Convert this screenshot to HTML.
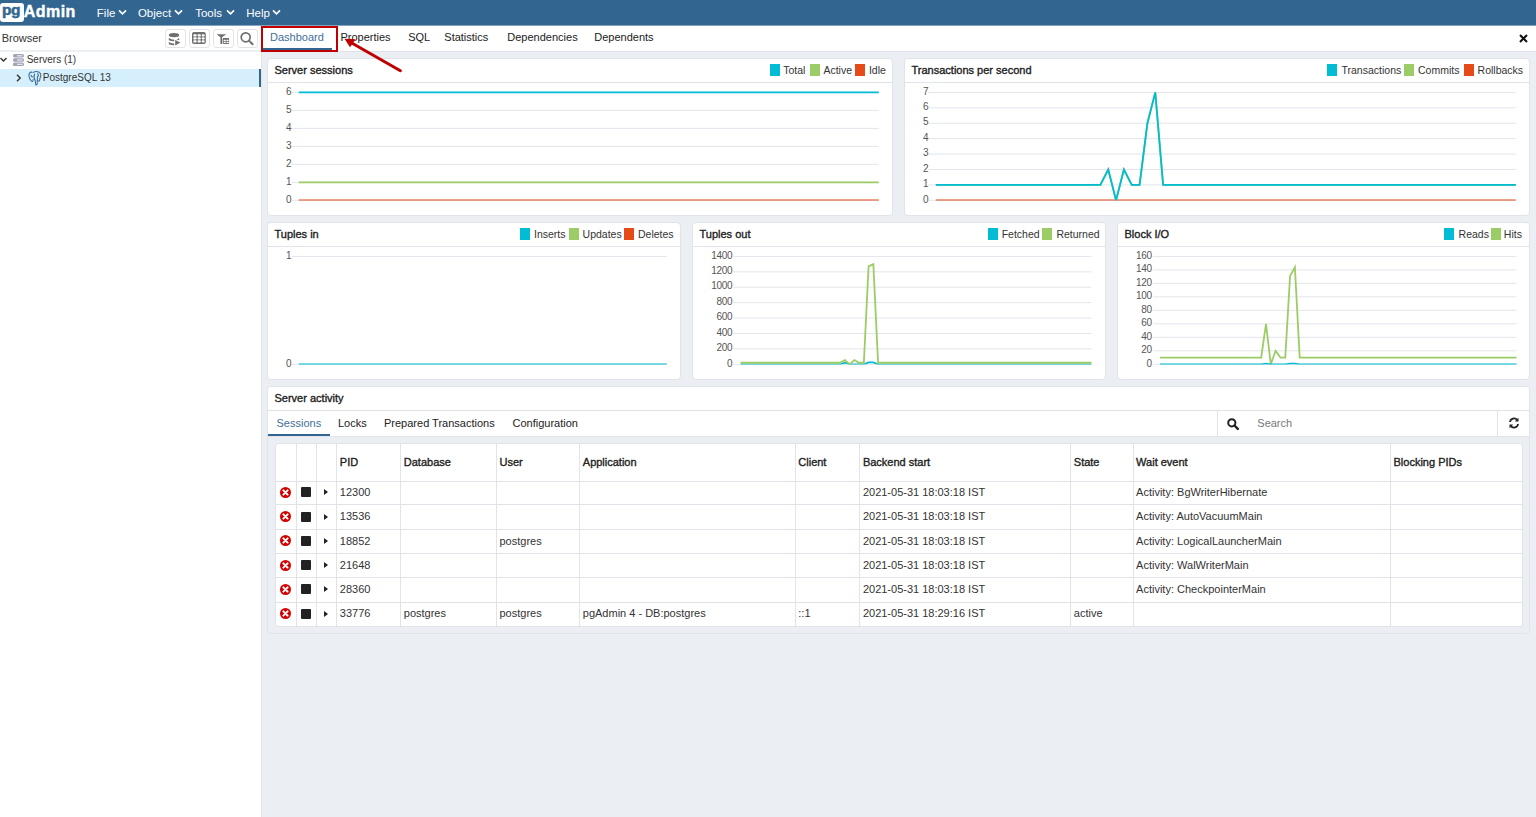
<!DOCTYPE html>
<html><head><meta charset="utf-8"><style>
html,body{margin:0;padding:0;}
body{width:1536px;height:817px;overflow:hidden;position:relative;background:#ebeef3;font-family:"Liberation Sans", sans-serif;}
.a{position:absolute;}
.t{position:absolute;line-height:1;white-space:nowrap;}
</style></head><body>
<div class="a" style="left:0px;top:0px;width:1536px;height:25px;background:#326690;"></div>
<div class="a" style="left:0px;top:3px;width:24px;height:18.5px;background:#fff;border-radius:3px;"></div>
<div class="t" style="left:2.0px;top:2.28px;font-size:15.5px;color:#326690;font-weight:bold;letter-spacing:-0.4px;-webkit-text-stroke:0.5px #326690;">pg</div>
<div class="t" style="left:23.8px;top:3.96px;font-size:16px;color:#fff;font-weight:bold;letter-spacing:0.45px;-webkit-text-stroke:0.4px #fff;">Admin</div>
<div class="t" style="left:96.8px;top:7.57px;font-size:11.5px;color:#fff;">File</div>
<svg class="a" style="left:117.60000000000001px;top:9.2px" width="9" height="7" viewBox="0 0 9 7"><path d="M1 1.4 L4.5 4.8 L8 1.4" fill="none" stroke="#fff" stroke-width="1.6"/></svg>
<div class="t" style="left:137.9px;top:7.57px;font-size:11.5px;color:#fff;">Object</div>
<svg class="a" style="left:174.0px;top:9.2px" width="9" height="7" viewBox="0 0 9 7"><path d="M1 1.4 L4.5 4.8 L8 1.4" fill="none" stroke="#fff" stroke-width="1.6"/></svg>
<div class="t" style="left:195.2px;top:7.57px;font-size:11.5px;color:#fff;">Tools</div>
<svg class="a" style="left:225.5px;top:9.2px" width="9" height="7" viewBox="0 0 9 7"><path d="M1 1.4 L4.5 4.8 L8 1.4" fill="none" stroke="#fff" stroke-width="1.6"/></svg>
<div class="t" style="left:246.3px;top:7.57px;font-size:11.5px;color:#fff;">Help</div>
<svg class="a" style="left:272.2px;top:9.2px" width="9" height="7" viewBox="0 0 9 7"><path d="M1 1.4 L4.5 4.8 L8 1.4" fill="none" stroke="#fff" stroke-width="1.6"/></svg>
<div class="a" style="left:0px;top:25px;width:261px;height:792px;background:#fff;"></div>
<div class="t" style="left:1.7px;top:32.79px;font-size:11px;color:#333;">Browser</div>
<div class="a" style="left:165px;top:29.2px;width:20.5px;height:18.5px;border:1px solid #e0e3e8;border-radius:3px;box-sizing:border-box;background:#fff;"></div>
<div class="a" style="left:189.2px;top:29.2px;width:20.5px;height:18.5px;border:1px solid #e0e3e8;border-radius:3px;box-sizing:border-box;background:#fff;"></div>
<div class="a" style="left:213.3px;top:29.2px;width:20.5px;height:18.5px;border:1px solid #e0e3e8;border-radius:3px;box-sizing:border-box;background:#fff;"></div>
<div class="a" style="left:237.4px;top:29.2px;width:20.5px;height:18.5px;border:1px solid #e0e3e8;border-radius:3px;box-sizing:border-box;background:#fff;"></div>
<svg class="a" style="left:163px;top:27px" width="100" height="24" viewBox="0 0 100 24">
<g fill="#6e6e6e">
<ellipse cx="11" cy="8.1" rx="5.2" ry="2.2"/>
<path d="M5.8 11 Q8.5 12.6 11.2 12.8 V14.2 Q8 14 5.8 13.2Z"/>
<path d="M13.6 12.4 Q15 12 16.2 11 V13.2Z"/>
<path d="M5.8 14.9 Q8.5 16.4 11.2 16.6 V18.2 Q8 18 5.8 17.2Z"/>
<path d="M12.2 12.9 L17.4 15.6 L12.2 18.6Z"/>
</g>
<g>
<rect x="29" y="5" width="13.8" height="12" rx="2" fill="#707070"/>
<g fill="#fff"><rect x="30.3" y="7.2" width="3.4" height="2.2" rx="1"/><rect x="34.5" y="7.2" width="3.4" height="2.2" rx="1"/><rect x="38.7" y="7.2" width="3" height="2.2" rx="1"/>
<rect x="30.3" y="10.2" width="3.4" height="2.2" rx="1"/><rect x="34.5" y="10.2" width="3.4" height="2.2" rx="1"/><rect x="38.7" y="10.2" width="3" height="2.2" rx="1"/>
<rect x="30.3" y="13.2" width="3.4" height="2.2" rx="1"/><rect x="34.5" y="13.2" width="3.4" height="2.2" rx="1"/><rect x="38.7" y="13.2" width="3" height="2.2" rx="1"/></g>
</g>
<g fill="#707070">
<path d="M53.6 7.2 H63.3 L59 10.2 V17 H57.4 V10.2Z"/>
<rect x="59.6" y="10.9" width="6.5" height="6.1" rx="1"/>
<g fill="#fff"><rect x="60.6" y="12.8" width="2.2" height="1.1" rx="0.5"/><rect x="63.4" y="12.8" width="2.2" height="1.1" rx="0.5"/><rect x="60.6" y="14.8" width="2.2" height="1.1" rx="0.5"/><rect x="63.4" y="14.8" width="2.2" height="1.1" rx="0.5"/></g>
</g>
<circle cx="82.7" cy="10.3" r="4.5" fill="none" stroke="#6e6e6e" stroke-width="1.7"/>
<path d="M86 13.6 L89.6 17.2" stroke="#6e6e6e" stroke-width="2" stroke-linecap="round"/>
</svg>
<div class="a" style="left:0px;top:50px;width:261px;height:2px;background:#ebeef3;"></div>
<svg class="a" style="left:0px;top:57px" width="8" height="6" viewBox="0 0 8 6"><path d="M0.5 1 L3.5 4 L6.5 1" fill="none" stroke="#333" stroke-width="1.4"/></svg>
<svg class="a" style="left:13px;top:54px" width="11" height="12" viewBox="0 0 11 12">
<g fill="#a3a3b8"><rect x="0" y="0" width="11" height="3.6" rx="1.6"/><rect x="0" y="4.2" width="11" height="3.6" rx="1.6"/><rect x="0" y="8.4" width="11" height="3.6" rx="1.6"/></g>
<g fill="#fff"><rect x="4" y="1.4" width="5.5" height="0.9"/><rect x="4" y="5.6" width="5.5" height="0.9"/><rect x="4" y="9.8" width="5.5" height="0.9"/></g>
</svg>
<div class="t" style="left:26.7px;top:55.14px;font-size:10px;color:#333;">Servers (1)</div>
<div class="a" style="left:0px;top:69px;width:261px;height:18px;background:#d6effc;"></div>
<div class="a" style="left:258.5px;top:69px;width:2.5px;height:18px;background:#326690;"></div>
<svg class="a" style="left:16px;top:74px" width="6" height="8" viewBox="0 0 6 8"><path d="M1 0.8 L4.2 4 L1 7.2" fill="none" stroke="#333" stroke-width="1.4"/></svg>
<svg class="a" style="left:27.5px;top:70.5px" width="14" height="15" viewBox="0 0 14 15">
<g fill="none" stroke="#3a6d96" stroke-width="1.05" stroke-linecap="round">
<path d="M4.2 1.2 C1.8 0.8 0.6 2.8 1 5.2 C1.4 7.6 2.4 9.6 3.8 10.4 C4.6 10.8 5.2 10 5 8.6"/>
<path d="M5.2 1.4 C7 0.4 9.6 0.5 11.2 1.3 C13.2 2.6 13 5.2 12 7.2 C11.5 8.4 12.2 9.6 11 10.2 C10.2 10.5 9.8 9.8 9.6 9"/>
<path d="M6.6 3 C5.6 5.2 6 7.8 7.2 9.8 C7.8 11.2 7.2 12.8 7.8 13.8 C8.8 14.2 9.4 13.2 9.2 11.6 C9 10 9.6 8 9.4 6"/>
<path d="M9.5 2.5 C10.5 3.5 10.5 5 9.6 6"/>
<path d="M3 4 C3.2 5.5 4 6 4.6 5.8"/>
</g></svg>
<div class="t" style="left:42.8px;top:73.03px;font-size:10px;color:#333;">PostgreSQL 13</div>
<div class="a" style="left:261px;top:25px;width:1275px;height:792px;background:#ebeef3;"></div>
<div class="a" style="left:261px;top:25px;width:1275px;height:26px;background:#fff;"></div>
<div class="a" style="left:0px;top:25px;width:1536px;height:1px;background:#86a3bd;"></div>
<div class="a" style="left:261px;top:51px;width:1px;height:766px;background:#e0e3e8;"></div>
<div class="a" style="left:261px;top:51px;width:1275px;height:1px;background:#e0e3e8;"></div>
<div class="t" style="left:270px;top:32.49px;font-size:11px;color:#3f6f99;">Dashboard</div>
<div class="t" style="left:340.4px;top:32.49px;font-size:11px;color:#222222;">Properties</div>
<div class="t" style="left:408.2px;top:32.49px;font-size:11px;color:#222222;">SQL</div>
<div class="t" style="left:444.3px;top:32.49px;font-size:11px;color:#222222;">Statistics</div>
<div class="t" style="left:507.3px;top:32.49px;font-size:11px;color:#222222;">Dependencies</div>
<div class="t" style="left:594.3px;top:32.49px;font-size:11px;color:#222222;">Dependents</div>
<div class="a" style="left:262px;top:48px;width:69.5px;height:2.5px;background:#326690;"></div>
<svg class="a" style="left:1519px;top:34px" width="9" height="9" viewBox="0 0 9 9"><path d="M1 1 L8 8 M8 1 L1 8" stroke="#111" stroke-width="2"/></svg>
<div class="a" style="left:267px;top:58px;width:626px;height:158px;background:#fff;border:1px solid #e0e3e8;border-radius:4px;box-sizing:border-box;"></div>
<div class="a" style="left:267px;top:82px;width:626px;height:1px;background:#e0e3e8;"></div>
<div class="t" style="left:274.5px;top:64.69px;font-size:11px;color:#222222;-webkit-text-stroke:0.35px #222;">Server sessions</div>
<div class="a" style="left:769.6px;top:64px;width:10px;height:12px;background:#00bcd4;"></div>
<div class="t" style="left:783.2px;top:65.11px;font-size:10.5px;color:#333;">Total</div>
<div class="a" style="left:809.7px;top:64px;width:10px;height:12px;background:#9ccc65;"></div>
<div class="t" style="left:823.4px;top:65.11px;font-size:10.5px;color:#333;">Active</div>
<div class="a" style="left:854.8px;top:64px;width:10px;height:12px;background:#e64a19;"></div>
<div class="t" style="left:868.9px;top:65.11px;font-size:10.5px;color:#333;">Idle</div>
<div class="a" style="left:904px;top:58px;width:626px;height:158px;background:#fff;border:1px solid #e0e3e8;border-radius:4px;box-sizing:border-box;"></div>
<div class="a" style="left:904px;top:82px;width:626px;height:1px;background:#e0e3e8;"></div>
<div class="t" style="left:911.5px;top:64.69px;font-size:11px;color:#222222;-webkit-text-stroke:0.35px #222;">Transactions per second</div>
<div class="a" style="left:1327px;top:64px;width:10px;height:12px;background:#00bcd4;"></div>
<div class="t" style="left:1341.5px;top:65.11px;font-size:10.5px;color:#333;">Transactions</div>
<div class="a" style="left:1404.2px;top:64px;width:10px;height:12px;background:#9ccc65;"></div>
<div class="t" style="left:1418px;top:65.11px;font-size:10.5px;color:#333;">Commits</div>
<div class="a" style="left:1463.8px;top:64px;width:10px;height:12px;background:#e64a19;"></div>
<div class="t" style="left:1477.6px;top:65.11px;font-size:10.5px;color:#333;">Rollbacks</div>
<div class="a" style="left:267px;top:222px;width:414px;height:158px;background:#fff;border:1px solid #e0e3e8;border-radius:4px;box-sizing:border-box;"></div>
<div class="a" style="left:267px;top:246px;width:414px;height:1px;background:#e0e3e8;"></div>
<div class="t" style="left:274.5px;top:228.69px;font-size:11px;color:#222222;-webkit-text-stroke:0.35px #222;">Tuples in</div>
<div class="a" style="left:519.8px;top:228px;width:10px;height:12px;background:#00bcd4;"></div>
<div class="t" style="left:534px;top:229.11px;font-size:10.5px;color:#333;">Inserts</div>
<div class="a" style="left:568.6px;top:228px;width:10px;height:12px;background:#9ccc65;"></div>
<div class="t" style="left:582.6px;top:229.11px;font-size:10.5px;color:#333;">Updates</div>
<div class="a" style="left:624px;top:228px;width:10px;height:12px;background:#e64a19;"></div>
<div class="t" style="left:638px;top:229.11px;font-size:10.5px;color:#333;">Deletes</div>
<div class="a" style="left:692px;top:222px;width:414px;height:158px;background:#fff;border:1px solid #e0e3e8;border-radius:4px;box-sizing:border-box;"></div>
<div class="a" style="left:692px;top:246px;width:414px;height:1px;background:#e0e3e8;"></div>
<div class="t" style="left:699.5px;top:228.69px;font-size:11px;color:#222222;-webkit-text-stroke:0.35px #222;">Tuples out</div>
<div class="a" style="left:988px;top:228px;width:10px;height:12px;background:#00bcd4;"></div>
<div class="t" style="left:1001.7px;top:229.11px;font-size:10.5px;color:#333;">Fetched</div>
<div class="a" style="left:1041.9px;top:228px;width:10px;height:12px;background:#9ccc65;"></div>
<div class="t" style="left:1056.4px;top:229.11px;font-size:10.5px;color:#333;">Returned</div>
<div class="a" style="left:1117px;top:222px;width:413px;height:158px;background:#fff;border:1px solid #e0e3e8;border-radius:4px;box-sizing:border-box;"></div>
<div class="a" style="left:1117px;top:246px;width:413px;height:1px;background:#e0e3e8;"></div>
<div class="t" style="left:1124.5px;top:228.69px;font-size:11px;color:#222222;-webkit-text-stroke:0.35px #222;">Block I/O</div>
<div class="a" style="left:1444.2px;top:228px;width:10px;height:12px;background:#00bcd4;"></div>
<div class="t" style="left:1458.6px;top:229.11px;font-size:10.5px;color:#333;">Reads</div>
<div class="a" style="left:1490.5px;top:228px;width:10px;height:12px;background:#9ccc65;"></div>
<div class="t" style="left:1503.8px;top:229.11px;font-size:10.5px;color:#333;">Hits</div>
<svg class="a" style="left:0;top:0" width="1536" height="817"><defs><clipPath id="c291_92"><rect x="296.8" y="86.4" width="584.0" height="114.0"/></clipPath></defs><line x1="291.8" y1="92.40" x2="878.8" y2="92.40" stroke="#e3e5ea" stroke-width="1"/><line x1="291.8" y1="110.38" x2="878.8" y2="110.38" stroke="#e3e5ea" stroke-width="1"/><line x1="291.8" y1="128.37" x2="878.8" y2="128.37" stroke="#e3e5ea" stroke-width="1"/><line x1="291.8" y1="146.35" x2="878.8" y2="146.35" stroke="#e3e5ea" stroke-width="1"/><line x1="291.8" y1="164.33" x2="878.8" y2="164.33" stroke="#e3e5ea" stroke-width="1"/><line x1="291.8" y1="182.32" x2="878.8" y2="182.32" stroke="#e3e5ea" stroke-width="1"/><line x1="291.8" y1="200.30" x2="878.8" y2="200.30" stroke="#e3e5ea" stroke-width="1"/><polyline clip-path="url(#c291_92)" points="298.80,200.30 306.64,200.30 314.48,200.30 322.31,200.30 330.15,200.30 337.99,200.30 345.83,200.30 353.66,200.30 361.50,200.30 369.34,200.30 377.18,200.30 385.02,200.30 392.85,200.30 400.69,200.30 408.53,200.30 416.37,200.30 424.21,200.30 432.04,200.30 439.88,200.30 447.72,200.30 455.56,200.30 463.39,200.30 471.23,200.30 479.07,200.30 486.91,200.30 494.75,200.30 502.58,200.30 510.42,200.30 518.26,200.30 526.10,200.30 533.94,200.30 541.77,200.30 549.61,200.30 557.45,200.30 565.29,200.30 573.12,200.30 580.96,200.30 588.80,200.30 596.64,200.30 604.48,200.30 612.31,200.30 620.15,200.30 627.99,200.30 635.83,200.30 643.66,200.30 651.50,200.30 659.34,200.30 667.18,200.30 675.02,200.30 682.85,200.30 690.69,200.30 698.53,200.30 706.37,200.30 714.21,200.30 722.04,200.30 729.88,200.30 737.72,200.30 745.56,200.30 753.39,200.30 761.23,200.30 769.07,200.30 776.91,200.30 784.75,200.30 792.58,200.30 800.42,200.30 808.26,200.30 816.10,200.30 823.94,200.30 831.77,200.30 839.61,200.30 847.45,200.30 855.29,200.30 863.12,200.30 870.96,200.30 878.80,200.30" fill="none" stroke="#e64a19" stroke-width="1.8" stroke-linejoin="miter"/><polyline clip-path="url(#c291_92)" points="298.80,182.32 306.64,182.32 314.48,182.32 322.31,182.32 330.15,182.32 337.99,182.32 345.83,182.32 353.66,182.32 361.50,182.32 369.34,182.32 377.18,182.32 385.02,182.32 392.85,182.32 400.69,182.32 408.53,182.32 416.37,182.32 424.21,182.32 432.04,182.32 439.88,182.32 447.72,182.32 455.56,182.32 463.39,182.32 471.23,182.32 479.07,182.32 486.91,182.32 494.75,182.32 502.58,182.32 510.42,182.32 518.26,182.32 526.10,182.32 533.94,182.32 541.77,182.32 549.61,182.32 557.45,182.32 565.29,182.32 573.12,182.32 580.96,182.32 588.80,182.32 596.64,182.32 604.48,182.32 612.31,182.32 620.15,182.32 627.99,182.32 635.83,182.32 643.66,182.32 651.50,182.32 659.34,182.32 667.18,182.32 675.02,182.32 682.85,182.32 690.69,182.32 698.53,182.32 706.37,182.32 714.21,182.32 722.04,182.32 729.88,182.32 737.72,182.32 745.56,182.32 753.39,182.32 761.23,182.32 769.07,182.32 776.91,182.32 784.75,182.32 792.58,182.32 800.42,182.32 808.26,182.32 816.10,182.32 823.94,182.32 831.77,182.32 839.61,182.32 847.45,182.32 855.29,182.32 863.12,182.32 870.96,182.32 878.80,182.32" fill="none" stroke="#9ccc65" stroke-width="1.8" stroke-linejoin="miter"/><polyline clip-path="url(#c291_92)" points="298.80,92.40 306.64,92.40 314.48,92.40 322.31,92.40 330.15,92.40 337.99,92.40 345.83,92.40 353.66,92.40 361.50,92.40 369.34,92.40 377.18,92.40 385.02,92.40 392.85,92.40 400.69,92.40 408.53,92.40 416.37,92.40 424.21,92.40 432.04,92.40 439.88,92.40 447.72,92.40 455.56,92.40 463.39,92.40 471.23,92.40 479.07,92.40 486.91,92.40 494.75,92.40 502.58,92.40 510.42,92.40 518.26,92.40 526.10,92.40 533.94,92.40 541.77,92.40 549.61,92.40 557.45,92.40 565.29,92.40 573.12,92.40 580.96,92.40 588.80,92.40 596.64,92.40 604.48,92.40 612.31,92.40 620.15,92.40 627.99,92.40 635.83,92.40 643.66,92.40 651.50,92.40 659.34,92.40 667.18,92.40 675.02,92.40 682.85,92.40 690.69,92.40 698.53,92.40 706.37,92.40 714.21,92.40 722.04,92.40 729.88,92.40 737.72,92.40 745.56,92.40 753.39,92.40 761.23,92.40 769.07,92.40 776.91,92.40 784.75,92.40 792.58,92.40 800.42,92.40 808.26,92.40 816.10,92.40 823.94,92.40 831.77,92.40 839.61,92.40 847.45,92.40 855.29,92.40 863.12,92.40 870.96,92.40 878.80,92.40" fill="none" stroke="#00bcd4" stroke-width="1.8" stroke-linejoin="miter"/></svg>
<div class="t" style="right:1244.8px;top:86.64px;font-size:10px;color:#555;letter-spacing:-0.3px;">6</div>
<div class="t" style="right:1244.8px;top:104.62px;font-size:10px;color:#555;letter-spacing:-0.3px;">5</div>
<div class="t" style="right:1244.8px;top:122.60px;font-size:10px;color:#555;letter-spacing:-0.3px;">4</div>
<div class="t" style="right:1244.8px;top:140.59px;font-size:10px;color:#555;letter-spacing:-0.3px;">3</div>
<div class="t" style="right:1244.8px;top:158.57px;font-size:10px;color:#555;letter-spacing:-0.3px;">2</div>
<div class="t" style="right:1244.8px;top:176.55px;font-size:10px;color:#555;letter-spacing:-0.3px;">1</div>
<div class="t" style="right:1244.8px;top:194.53px;font-size:10px;color:#555;letter-spacing:-0.3px;">0</div>
<svg class="a" style="left:0;top:0" width="1536" height="817"><defs><clipPath id="c928_92"><rect x="933.8" y="86.4" width="584.0" height="114.0"/></clipPath></defs><line x1="928.2" y1="92.40" x2="1515.8" y2="92.40" stroke="#e3e5ea" stroke-width="1"/><line x1="928.2" y1="107.81" x2="1515.8" y2="107.81" stroke="#e3e5ea" stroke-width="1"/><line x1="928.2" y1="123.23" x2="1515.8" y2="123.23" stroke="#e3e5ea" stroke-width="1"/><line x1="928.2" y1="138.64" x2="1515.8" y2="138.64" stroke="#e3e5ea" stroke-width="1"/><line x1="928.2" y1="154.06" x2="1515.8" y2="154.06" stroke="#e3e5ea" stroke-width="1"/><line x1="928.2" y1="169.47" x2="1515.8" y2="169.47" stroke="#e3e5ea" stroke-width="1"/><line x1="928.2" y1="184.89" x2="1515.8" y2="184.89" stroke="#e3e5ea" stroke-width="1"/><line x1="928.2" y1="200.30" x2="1515.8" y2="200.30" stroke="#e3e5ea" stroke-width="1"/><polyline clip-path="url(#c928_92)" points="935.80,200.30 943.64,200.30 951.48,200.30 959.31,200.30 967.15,200.30 974.99,200.30 982.83,200.30 990.66,200.30 998.50,200.30 1006.34,200.30 1014.18,200.30 1022.02,200.30 1029.85,200.30 1037.69,200.30 1045.53,200.30 1053.37,200.30 1061.21,200.30 1069.04,200.30 1076.88,200.30 1084.72,200.30 1092.56,200.30 1100.39,200.30 1108.23,200.30 1116.07,200.30 1123.91,200.30 1131.75,200.30 1139.58,200.30 1147.42,200.30 1155.26,200.30 1163.10,200.30 1170.94,200.30 1178.77,200.30 1186.61,200.30 1194.45,200.30 1202.29,200.30 1210.12,200.30 1217.96,200.30 1225.80,200.30 1233.64,200.30 1241.48,200.30 1249.31,200.30 1257.15,200.30 1264.99,200.30 1272.83,200.30 1280.66,200.30 1288.50,200.30 1296.34,200.30 1304.18,200.30 1312.02,200.30 1319.85,200.30 1327.69,200.30 1335.53,200.30 1343.37,200.30 1351.21,200.30 1359.04,200.30 1366.88,200.30 1374.72,200.30 1382.56,200.30 1390.39,200.30 1398.23,200.30 1406.07,200.30 1413.91,200.30 1421.75,200.30 1429.58,200.30 1437.42,200.30 1445.26,200.30 1453.10,200.30 1460.94,200.30 1468.77,200.30 1476.61,200.30 1484.45,200.30 1492.29,200.30 1500.12,200.30 1507.96,200.30 1515.80,200.30" fill="none" stroke="#e64a19" stroke-width="1.8" stroke-linejoin="miter"/><polyline clip-path="url(#c928_92)" points="935.80,184.89 943.64,184.89 951.48,184.89 959.31,184.89 967.15,184.89 974.99,184.89 982.83,184.89 990.66,184.89 998.50,184.89 1006.34,184.89 1014.18,184.89 1022.02,184.89 1029.85,184.89 1037.69,184.89 1045.53,184.89 1053.37,184.89 1061.21,184.89 1069.04,184.89 1076.88,184.89 1084.72,184.89 1092.56,184.89 1100.39,184.89 1108.23,169.47 1116.07,200.30 1123.91,169.47 1131.75,184.89 1139.58,184.89 1147.42,123.23 1155.26,92.40 1163.10,184.89 1170.94,184.89 1178.77,184.89 1186.61,184.89 1194.45,184.89 1202.29,184.89 1210.12,184.89 1217.96,184.89 1225.80,184.89 1233.64,184.89 1241.48,184.89 1249.31,184.89 1257.15,184.89 1264.99,184.89 1272.83,184.89 1280.66,184.89 1288.50,184.89 1296.34,184.89 1304.18,184.89 1312.02,184.89 1319.85,184.89 1327.69,184.89 1335.53,184.89 1343.37,184.89 1351.21,184.89 1359.04,184.89 1366.88,184.89 1374.72,184.89 1382.56,184.89 1390.39,184.89 1398.23,184.89 1406.07,184.89 1413.91,184.89 1421.75,184.89 1429.58,184.89 1437.42,184.89 1445.26,184.89 1453.10,184.89 1460.94,184.89 1468.77,184.89 1476.61,184.89 1484.45,184.89 1492.29,184.89 1500.12,184.89 1507.96,184.89 1515.80,184.89" fill="none" stroke="#9ccc65" stroke-width="1.8" stroke-linejoin="miter"/><polyline clip-path="url(#c928_92)" points="935.80,184.89 943.64,184.89 951.48,184.89 959.31,184.89 967.15,184.89 974.99,184.89 982.83,184.89 990.66,184.89 998.50,184.89 1006.34,184.89 1014.18,184.89 1022.02,184.89 1029.85,184.89 1037.69,184.89 1045.53,184.89 1053.37,184.89 1061.21,184.89 1069.04,184.89 1076.88,184.89 1084.72,184.89 1092.56,184.89 1100.39,184.89 1108.23,169.47 1116.07,200.30 1123.91,169.47 1131.75,184.89 1139.58,184.89 1147.42,123.23 1155.26,92.40 1163.10,184.89 1170.94,184.89 1178.77,184.89 1186.61,184.89 1194.45,184.89 1202.29,184.89 1210.12,184.89 1217.96,184.89 1225.80,184.89 1233.64,184.89 1241.48,184.89 1249.31,184.89 1257.15,184.89 1264.99,184.89 1272.83,184.89 1280.66,184.89 1288.50,184.89 1296.34,184.89 1304.18,184.89 1312.02,184.89 1319.85,184.89 1327.69,184.89 1335.53,184.89 1343.37,184.89 1351.21,184.89 1359.04,184.89 1366.88,184.89 1374.72,184.89 1382.56,184.89 1390.39,184.89 1398.23,184.89 1406.07,184.89 1413.91,184.89 1421.75,184.89 1429.58,184.89 1437.42,184.89 1445.26,184.89 1453.10,184.89 1460.94,184.89 1468.77,184.89 1476.61,184.89 1484.45,184.89 1492.29,184.89 1500.12,184.89 1507.96,184.89 1515.80,184.89" fill="none" stroke="#00bcd4" stroke-width="1.8" stroke-linejoin="miter"/></svg>
<div class="t" style="right:607.8px;top:86.64px;font-size:10px;color:#555;letter-spacing:-0.3px;">7</div>
<div class="t" style="right:607.8px;top:102.05px;font-size:10px;color:#555;letter-spacing:-0.3px;">6</div>
<div class="t" style="right:607.8px;top:117.46px;font-size:10px;color:#555;letter-spacing:-0.3px;">5</div>
<div class="t" style="right:607.8px;top:132.88px;font-size:10px;color:#555;letter-spacing:-0.3px;">4</div>
<div class="t" style="right:607.8px;top:148.29px;font-size:10px;color:#555;letter-spacing:-0.3px;">3</div>
<div class="t" style="right:607.8px;top:163.71px;font-size:10px;color:#555;letter-spacing:-0.3px;">2</div>
<div class="t" style="right:607.8px;top:179.12px;font-size:10px;color:#555;letter-spacing:-0.3px;">1</div>
<div class="t" style="right:607.8px;top:194.53px;font-size:10px;color:#555;letter-spacing:-0.3px;">0</div>
<svg class="a" style="left:0;top:0" width="1536" height="817"><defs><clipPath id="c291_256"><rect x="296.8" y="250.39999999999998" width="371.99999999999994" height="114.00000000000003"/></clipPath></defs><line x1="291.8" y1="256.40" x2="666.8" y2="256.40" stroke="#e3e5ea" stroke-width="1"/><line x1="291.8" y1="364.30" x2="666.8" y2="364.30" stroke="#e3e5ea" stroke-width="1"/><polyline clip-path="url(#c291_256)" points="298.80,364.30 303.77,364.30 308.75,364.30 313.72,364.30 318.69,364.30 323.66,364.30 328.64,364.30 333.61,364.30 338.58,364.30 343.56,364.30 348.53,364.30 353.50,364.30 358.48,364.30 363.45,364.30 368.42,364.30 373.39,364.30 378.37,364.30 383.34,364.30 388.31,364.30 393.29,364.30 398.26,364.30 403.23,364.30 408.21,364.30 413.18,364.30 418.15,364.30 423.12,364.30 428.10,364.30 433.07,364.30 438.04,364.30 443.02,364.30 447.99,364.30 452.96,364.30 457.94,364.30 462.91,364.30 467.88,364.30 472.85,364.30 477.83,364.30 482.80,364.30 487.77,364.30 492.75,364.30 497.72,364.30 502.69,364.30 507.66,364.30 512.64,364.30 517.61,364.30 522.58,364.30 527.56,364.30 532.53,364.30 537.50,364.30 542.48,364.30 547.45,364.30 552.42,364.30 557.39,364.30 562.37,364.30 567.34,364.30 572.31,364.30 577.29,364.30 582.26,364.30 587.23,364.30 592.21,364.30 597.18,364.30 602.15,364.30 607.12,364.30 612.10,364.30 617.07,364.30 622.04,364.30 627.02,364.30 631.99,364.30 636.96,364.30 641.94,364.30 646.91,364.30 651.88,364.30 656.85,364.30 661.83,364.30 666.80,364.30" fill="none" stroke="#00bcd4" stroke-width="1.8" stroke-linejoin="miter"/></svg>
<div class="t" style="right:1244.8px;top:250.63px;font-size:10px;color:#555;letter-spacing:-0.3px;">1</div>
<div class="t" style="right:1244.8px;top:358.54px;font-size:10px;color:#555;letter-spacing:-0.3px;">0</div>
<svg class="a" style="left:0;top:0" width="1536" height="817"><defs><clipPath id="c733_256"><rect x="738.6" y="250.39999999999998" width="354.80000000000007" height="114.00000000000003"/></clipPath></defs><line x1="733.2" y1="256.40" x2="1091.4" y2="256.40" stroke="#e3e5ea" stroke-width="1"/><line x1="733.2" y1="271.81" x2="1091.4" y2="271.81" stroke="#e3e5ea" stroke-width="1"/><line x1="733.2" y1="287.23" x2="1091.4" y2="287.23" stroke="#e3e5ea" stroke-width="1"/><line x1="733.2" y1="302.64" x2="1091.4" y2="302.64" stroke="#e3e5ea" stroke-width="1"/><line x1="733.2" y1="318.06" x2="1091.4" y2="318.06" stroke="#e3e5ea" stroke-width="1"/><line x1="733.2" y1="333.47" x2="1091.4" y2="333.47" stroke="#e3e5ea" stroke-width="1"/><line x1="733.2" y1="348.89" x2="1091.4" y2="348.89" stroke="#e3e5ea" stroke-width="1"/><line x1="733.2" y1="364.30" x2="1091.4" y2="364.30" stroke="#e3e5ea" stroke-width="1"/><polyline clip-path="url(#c733_256)" points="740.60,364.30 745.34,364.30 750.08,364.30 754.82,364.30 759.56,364.30 764.30,364.30 769.04,364.30 773.78,364.30 778.52,364.30 783.26,364.30 788.01,364.30 792.75,364.30 797.49,364.30 802.23,364.30 806.97,364.30 811.71,364.30 816.45,364.30 821.19,364.30 825.93,364.30 830.67,364.30 835.41,364.30 840.15,364.30 844.89,362.60 849.63,364.30 854.37,364.30 859.11,364.30 863.85,364.30 868.59,362.37 873.34,362.37 878.08,364.30 882.82,364.30 887.56,364.30 892.30,364.30 897.04,364.30 901.78,364.30 906.52,364.30 911.26,364.30 916.00,364.30 920.74,364.30 925.48,364.30 930.22,364.30 934.96,364.30 939.70,364.30 944.44,364.30 949.18,364.30 953.92,364.30 958.66,364.30 963.41,364.30 968.15,364.30 972.89,364.30 977.63,364.30 982.37,364.30 987.11,364.30 991.85,364.30 996.59,364.30 1001.33,364.30 1006.07,364.30 1010.81,364.30 1015.55,364.30 1020.29,364.30 1025.03,364.30 1029.77,364.30 1034.51,364.30 1039.25,364.30 1043.99,364.30 1048.74,364.30 1053.48,364.30 1058.22,364.30 1062.96,364.30 1067.70,364.30 1072.44,364.30 1077.18,364.30 1081.92,364.30 1086.66,364.30 1091.40,364.30" fill="none" stroke="#00bcd4" stroke-width="1.8" stroke-linejoin="miter"/><polyline clip-path="url(#c733_256)" points="740.60,362.76 745.34,362.76 750.08,362.76 754.82,362.76 759.56,362.76 764.30,362.76 769.04,362.76 773.78,362.76 778.52,362.76 783.26,362.76 788.01,362.76 792.75,362.76 797.49,362.76 802.23,362.76 806.97,362.76 811.71,362.76 816.45,362.76 821.19,362.76 825.93,362.76 830.67,362.76 835.41,362.76 840.15,362.76 844.89,360.06 849.63,364.30 854.37,360.06 859.11,362.76 863.85,362.76 868.59,266.42 873.34,264.11 878.08,362.76 882.82,362.76 887.56,362.76 892.30,362.76 897.04,362.76 901.78,362.76 906.52,362.76 911.26,362.76 916.00,362.76 920.74,362.76 925.48,362.76 930.22,362.76 934.96,362.76 939.70,362.76 944.44,362.76 949.18,362.76 953.92,362.76 958.66,362.76 963.41,362.76 968.15,362.76 972.89,362.76 977.63,362.76 982.37,362.76 987.11,362.76 991.85,362.76 996.59,362.76 1001.33,362.76 1006.07,362.76 1010.81,362.76 1015.55,362.76 1020.29,362.76 1025.03,362.76 1029.77,362.76 1034.51,362.76 1039.25,362.76 1043.99,362.76 1048.74,362.76 1053.48,362.76 1058.22,362.76 1062.96,362.76 1067.70,362.76 1072.44,362.76 1077.18,362.76 1081.92,362.76 1086.66,362.76 1091.40,362.76" fill="none" stroke="#9ccc65" stroke-width="1.8" stroke-linejoin="miter"/></svg>
<div class="t" style="right:803.8px;top:250.63px;font-size:10px;color:#555;letter-spacing:-0.3px;">1400</div>
<div class="t" style="right:803.8px;top:266.05px;font-size:10px;color:#555;letter-spacing:-0.3px;">1200</div>
<div class="t" style="right:803.8px;top:281.46px;font-size:10px;color:#555;letter-spacing:-0.3px;">1000</div>
<div class="t" style="right:803.8px;top:296.88px;font-size:10px;color:#555;letter-spacing:-0.3px;">800</div>
<div class="t" style="right:803.8px;top:312.29px;font-size:10px;color:#555;letter-spacing:-0.3px;">600</div>
<div class="t" style="right:803.8px;top:327.71px;font-size:10px;color:#555;letter-spacing:-0.3px;">400</div>
<div class="t" style="right:803.8px;top:343.12px;font-size:10px;color:#555;letter-spacing:-0.3px;">200</div>
<div class="t" style="right:803.8px;top:358.54px;font-size:10px;color:#555;letter-spacing:-0.3px;">0</div>
<svg class="a" style="left:0;top:0" width="1536" height="817"><defs><clipPath id="c1152_256"><rect x="1158" y="250.39999999999998" width="360.5" height="114.00000000000003"/></clipPath></defs><line x1="1152.8" y1="256.40" x2="1516.5" y2="256.40" stroke="#e3e5ea" stroke-width="1"/><line x1="1152.8" y1="269.89" x2="1516.5" y2="269.89" stroke="#e3e5ea" stroke-width="1"/><line x1="1152.8" y1="283.38" x2="1516.5" y2="283.38" stroke="#e3e5ea" stroke-width="1"/><line x1="1152.8" y1="296.86" x2="1516.5" y2="296.86" stroke="#e3e5ea" stroke-width="1"/><line x1="1152.8" y1="310.35" x2="1516.5" y2="310.35" stroke="#e3e5ea" stroke-width="1"/><line x1="1152.8" y1="323.84" x2="1516.5" y2="323.84" stroke="#e3e5ea" stroke-width="1"/><line x1="1152.8" y1="337.32" x2="1516.5" y2="337.32" stroke="#e3e5ea" stroke-width="1"/><line x1="1152.8" y1="350.81" x2="1516.5" y2="350.81" stroke="#e3e5ea" stroke-width="1"/><line x1="1152.8" y1="364.30" x2="1516.5" y2="364.30" stroke="#e3e5ea" stroke-width="1"/><polyline clip-path="url(#c1152_256)" points="1160.00,357.56 1164.82,357.56 1169.64,357.56 1174.45,357.56 1179.27,357.56 1184.09,357.56 1188.91,357.56 1193.72,357.56 1198.54,357.56 1203.36,357.56 1208.18,357.56 1212.99,357.56 1217.81,357.56 1222.63,357.56 1227.45,357.56 1232.26,357.56 1237.08,357.56 1241.90,357.56 1246.72,357.56 1251.53,357.56 1256.35,357.56 1261.17,357.56 1265.99,323.84 1270.80,364.30 1275.62,350.81 1280.44,357.56 1285.26,357.56 1290.07,275.96 1294.89,267.19 1299.71,357.56 1304.53,357.56 1309.34,357.56 1314.16,357.56 1318.98,357.56 1323.80,357.56 1328.61,357.56 1333.43,357.56 1338.25,357.56 1343.07,357.56 1347.89,357.56 1352.70,357.56 1357.52,357.56 1362.34,357.56 1367.16,357.56 1371.97,357.56 1376.79,357.56 1381.61,357.56 1386.43,357.56 1391.24,357.56 1396.06,357.56 1400.88,357.56 1405.70,357.56 1410.51,357.56 1415.33,357.56 1420.15,357.56 1424.97,357.56 1429.78,357.56 1434.60,357.56 1439.42,357.56 1444.24,357.56 1449.05,357.56 1453.87,357.56 1458.69,357.56 1463.51,357.56 1468.32,357.56 1473.14,357.56 1477.96,357.56 1482.78,357.56 1487.59,357.56 1492.41,357.56 1497.23,357.56 1502.05,357.56 1506.86,357.56 1511.68,357.56 1516.50,357.56" fill="none" stroke="#9ccc65" stroke-width="1.8" stroke-linejoin="miter"/><polyline clip-path="url(#c1152_256)" points="1160.00,364.30 1164.82,364.30 1169.64,364.30 1174.45,364.30 1179.27,364.30 1184.09,364.30 1188.91,364.30 1193.72,364.30 1198.54,364.30 1203.36,364.30 1208.18,364.30 1212.99,364.30 1217.81,364.30 1222.63,364.30 1227.45,364.30 1232.26,364.30 1237.08,364.30 1241.90,364.30 1246.72,364.30 1251.53,364.30 1256.35,364.30 1261.17,364.30 1265.99,363.63 1270.80,364.30 1275.62,364.30 1280.44,364.30 1285.26,364.30 1290.07,363.63 1294.89,363.63 1299.71,364.30 1304.53,364.30 1309.34,364.30 1314.16,364.30 1318.98,364.30 1323.80,364.30 1328.61,364.30 1333.43,364.30 1338.25,364.30 1343.07,364.30 1347.89,364.30 1352.70,364.30 1357.52,364.30 1362.34,364.30 1367.16,364.30 1371.97,364.30 1376.79,364.30 1381.61,364.30 1386.43,364.30 1391.24,364.30 1396.06,364.30 1400.88,364.30 1405.70,364.30 1410.51,364.30 1415.33,364.30 1420.15,364.30 1424.97,364.30 1429.78,364.30 1434.60,364.30 1439.42,364.30 1444.24,364.30 1449.05,364.30 1453.87,364.30 1458.69,364.30 1463.51,364.30 1468.32,364.30 1473.14,364.30 1477.96,364.30 1482.78,364.30 1487.59,364.30 1492.41,364.30 1497.23,364.30 1502.05,364.30 1506.86,364.30 1511.68,364.30 1516.50,364.30" fill="none" stroke="#00bcd4" stroke-width="1.8" stroke-linejoin="miter"/></svg>
<div class="t" style="right:384.20000000000005px;top:250.63px;font-size:10px;color:#555;letter-spacing:-0.3px;">160</div>
<div class="t" style="right:384.20000000000005px;top:264.12px;font-size:10px;color:#555;letter-spacing:-0.3px;">140</div>
<div class="t" style="right:384.20000000000005px;top:277.61px;font-size:10px;color:#555;letter-spacing:-0.3px;">120</div>
<div class="t" style="right:384.20000000000005px;top:291.10px;font-size:10px;color:#555;letter-spacing:-0.3px;">100</div>
<div class="t" style="right:384.20000000000005px;top:304.59px;font-size:10px;color:#555;letter-spacing:-0.3px;">80</div>
<div class="t" style="right:384.20000000000005px;top:318.07px;font-size:10px;color:#555;letter-spacing:-0.3px;">60</div>
<div class="t" style="right:384.20000000000005px;top:331.56px;font-size:10px;color:#555;letter-spacing:-0.3px;">40</div>
<div class="t" style="right:384.20000000000005px;top:345.05px;font-size:10px;color:#555;letter-spacing:-0.3px;">20</div>
<div class="t" style="right:384.20000000000005px;top:358.54px;font-size:10px;color:#555;letter-spacing:-0.3px;">0</div>
<div class="a" style="left:267px;top:386px;width:1263px;height:248px;background:#ebeef3;border:1px solid #e0e3e8;border-radius:4px;box-sizing:border-box;"></div>
<div class="a" style="left:268px;top:387px;width:1261px;height:49px;background:#fff;border-radius:3px 3px 0 0;"></div>
<div class="a" style="left:268px;top:410px;width:1261px;height:1px;background:#e0e3e8;"></div>
<div class="t" style="left:274.5px;top:393.19px;font-size:11px;color:#222222;-webkit-text-stroke:0.35px #222;">Server activity</div>
<div class="t" style="left:276.5px;top:418.19px;font-size:11px;color:#3f6f99;">Sessions</div>
<div class="t" style="left:338px;top:418.19px;font-size:11px;color:#222222;">Locks</div>
<div class="t" style="left:384px;top:418.19px;font-size:11px;color:#222222;">Prepared Transactions</div>
<div class="t" style="left:512.5px;top:418.19px;font-size:11px;color:#222222;">Configuration</div>
<div class="a" style="left:268px;top:433.8px;width:62px;height:2.2px;background:#326690;"></div>
<div class="a" style="left:268px;top:435.5px;width:1261px;height:1px;background:#e0e3e8;"></div>
<div class="a" style="left:1217px;top:411px;width:1px;height:25px;background:#e0e3e8;"></div>
<div class="a" style="left:1497px;top:411px;width:1px;height:25px;background:#e0e3e8;"></div>
<svg class="a" style="left:1227px;top:417.5px" width="12" height="12" viewBox="0 0 12 12">
<circle cx="4.8" cy="4.8" r="3.6" fill="none" stroke="#222" stroke-width="2"/>
<path d="M7.5 7.5 L10.8 10.8" stroke="#222" stroke-width="2.4" stroke-linecap="round"/></svg>
<div class="t" style="left:1257.3px;top:417.99px;font-size:11px;color:#777;">Search</div>
<svg class="a" style="left:1508px;top:417px" width="12" height="12" viewBox="0 0 12 12">
<path d="M2 5 A4 4 0 0 1 9.3 3.2" fill="none" stroke="#222" stroke-width="1.8"/>
<path d="M10.5 0.8 V4.6 H6.8Z" fill="#222"/>
<path d="M10 7 A4 4 0 0 1 2.7 8.8" fill="none" stroke="#222" stroke-width="1.8"/>
<path d="M1.5 11.2 V7.4 H5.2Z" fill="#222"/>
</svg>
<div class="a" style="left:275px;top:443px;width:1248px;height:184px;background:#fff;border:1px solid #e0e3e8;border-radius:3px;box-sizing:border-box;"></div>
<div class="a" style="left:295.5px;top:443px;width:1px;height:184px;background:#e0e3e8;"></div>
<div class="a" style="left:316px;top:443px;width:1px;height:184px;background:#e0e3e8;"></div>
<div class="a" style="left:336.3px;top:443px;width:1px;height:184px;background:#e0e3e8;"></div>
<div class="a" style="left:400.3px;top:443px;width:1px;height:184px;background:#e0e3e8;"></div>
<div class="a" style="left:496px;top:443px;width:1px;height:184px;background:#e0e3e8;"></div>
<div class="a" style="left:579.3px;top:443px;width:1px;height:184px;background:#e0e3e8;"></div>
<div class="a" style="left:794.8px;top:443px;width:1px;height:184px;background:#e0e3e8;"></div>
<div class="a" style="left:859.4px;top:443px;width:1px;height:184px;background:#e0e3e8;"></div>
<div class="a" style="left:1070.3px;top:443px;width:1px;height:184px;background:#e0e3e8;"></div>
<div class="a" style="left:1132.6px;top:443px;width:1px;height:184px;background:#e0e3e8;"></div>
<div class="a" style="left:1390px;top:443px;width:1px;height:184px;background:#e0e3e8;"></div>
<div class="a" style="left:275px;top:480.5px;width:1248px;height:1px;background:#e0e3e8;"></div>
<div class="a" style="left:275px;top:504.4px;width:1248px;height:1px;background:#e0e3e8;"></div>
<div class="a" style="left:275px;top:528.8px;width:1248px;height:1px;background:#e0e3e8;"></div>
<div class="a" style="left:275px;top:552.9px;width:1248px;height:1px;background:#e0e3e8;"></div>
<div class="a" style="left:275px;top:577.4px;width:1248px;height:1px;background:#e0e3e8;"></div>
<div class="a" style="left:275px;top:601.5px;width:1248px;height:1px;background:#e0e3e8;"></div>
<div class="t" style="left:339.8px;top:456.69px;font-size:11px;color:#222222;-webkit-text-stroke:0.35px #222;">PID</div>
<div class="t" style="left:403.8px;top:456.69px;font-size:11px;color:#222222;-webkit-text-stroke:0.35px #222;">Database</div>
<div class="t" style="left:499.5px;top:456.69px;font-size:11px;color:#222222;-webkit-text-stroke:0.35px #222;">User</div>
<div class="t" style="left:582.8px;top:456.69px;font-size:11px;color:#222222;-webkit-text-stroke:0.35px #222;">Application</div>
<div class="t" style="left:798.3px;top:456.69px;font-size:11px;color:#222222;-webkit-text-stroke:0.35px #222;">Client</div>
<div class="t" style="left:862.9px;top:456.69px;font-size:11px;color:#222222;-webkit-text-stroke:0.35px #222;">Backend start</div>
<div class="t" style="left:1073.8px;top:456.69px;font-size:11px;color:#222222;-webkit-text-stroke:0.35px #222;">State</div>
<div class="t" style="left:1136.1px;top:456.69px;font-size:11px;color:#222222;-webkit-text-stroke:0.35px #222;">Wait event</div>
<div class="t" style="left:1393.5px;top:456.69px;font-size:11px;color:#222222;-webkit-text-stroke:0.35px #222;">Blocking PIDs</div>
<div class="t" style="left:339.8px;top:487.29px;font-size:11px;color:#333;">12300</div>
<div class="t" style="left:862.9px;top:487.29px;font-size:11px;color:#333;">2021-05-31 18:03:18 IST</div>
<div class="t" style="left:1136.1px;top:487.29px;font-size:11px;color:#333;">Activity: BgWriterHibernate</div>
<svg class="a" style="left:279.9px;top:486.95px" width="11" height="11" viewBox="0 0 11 11"><circle cx="5.5" cy="5.5" r="5.5" fill="#d40000"/><path d="M3.4 3.4 L7.6 7.6 M7.6 3.4 L3.4 7.6" stroke="#fff" stroke-width="2" stroke-linecap="round"/></svg>
<div class="a" style="left:301px;top:487.45px;width:10px;height:10px;background:#222;border-radius:1px;"></div>
<svg class="a" style="left:324px;top:489.45px" width="4" height="6" viewBox="0 0 4 6"><path d="M0 0 L4 3 L0 6Z" fill="#222"/></svg>
<div class="t" style="left:339.8px;top:511.19px;font-size:11px;color:#333;">13536</div>
<div class="t" style="left:862.9px;top:511.19px;font-size:11px;color:#333;">2021-05-31 18:03:18 IST</div>
<div class="t" style="left:1136.1px;top:511.19px;font-size:11px;color:#333;">Activity: AutoVacuumMain</div>
<svg class="a" style="left:279.9px;top:511.10px" width="11" height="11" viewBox="0 0 11 11"><circle cx="5.5" cy="5.5" r="5.5" fill="#d40000"/><path d="M3.4 3.4 L7.6 7.6 M7.6 3.4 L3.4 7.6" stroke="#fff" stroke-width="2" stroke-linecap="round"/></svg>
<div class="a" style="left:301px;top:511.5999999999999px;width:10px;height:10px;background:#222;border-radius:1px;"></div>
<svg class="a" style="left:324px;top:513.60px" width="4" height="6" viewBox="0 0 4 6"><path d="M0 0 L4 3 L0 6Z" fill="#222"/></svg>
<div class="t" style="left:339.8px;top:535.59px;font-size:11px;color:#333;">18852</div>
<div class="t" style="left:499.5px;top:535.59px;font-size:11px;color:#333;">postgres</div>
<div class="t" style="left:862.9px;top:535.59px;font-size:11px;color:#333;">2021-05-31 18:03:18 IST</div>
<div class="t" style="left:1136.1px;top:535.59px;font-size:11px;color:#333;">Activity: LogicalLauncherMain</div>
<svg class="a" style="left:279.9px;top:535.35px" width="11" height="11" viewBox="0 0 11 11"><circle cx="5.5" cy="5.5" r="5.5" fill="#d40000"/><path d="M3.4 3.4 L7.6 7.6 M7.6 3.4 L3.4 7.6" stroke="#fff" stroke-width="2" stroke-linecap="round"/></svg>
<div class="a" style="left:301px;top:535.8499999999999px;width:10px;height:10px;background:#222;border-radius:1px;"></div>
<svg class="a" style="left:324px;top:537.85px" width="4" height="6" viewBox="0 0 4 6"><path d="M0 0 L4 3 L0 6Z" fill="#222"/></svg>
<div class="t" style="left:339.8px;top:559.69px;font-size:11px;color:#333;">21648</div>
<div class="t" style="left:862.9px;top:559.69px;font-size:11px;color:#333;">2021-05-31 18:03:18 IST</div>
<div class="t" style="left:1136.1px;top:559.69px;font-size:11px;color:#333;">Activity: WalWriterMain</div>
<svg class="a" style="left:279.9px;top:559.65px" width="11" height="11" viewBox="0 0 11 11"><circle cx="5.5" cy="5.5" r="5.5" fill="#d40000"/><path d="M3.4 3.4 L7.6 7.6 M7.6 3.4 L3.4 7.6" stroke="#fff" stroke-width="2" stroke-linecap="round"/></svg>
<div class="a" style="left:301px;top:560.15px;width:10px;height:10px;background:#222;border-radius:1px;"></div>
<svg class="a" style="left:324px;top:562.15px" width="4" height="6" viewBox="0 0 4 6"><path d="M0 0 L4 3 L0 6Z" fill="#222"/></svg>
<div class="t" style="left:339.8px;top:584.19px;font-size:11px;color:#333;">28360</div>
<div class="t" style="left:862.9px;top:584.19px;font-size:11px;color:#333;">2021-05-31 18:03:18 IST</div>
<div class="t" style="left:1136.1px;top:584.19px;font-size:11px;color:#333;">Activity: CheckpointerMain</div>
<svg class="a" style="left:279.9px;top:583.95px" width="11" height="11" viewBox="0 0 11 11"><circle cx="5.5" cy="5.5" r="5.5" fill="#d40000"/><path d="M3.4 3.4 L7.6 7.6 M7.6 3.4 L3.4 7.6" stroke="#fff" stroke-width="2" stroke-linecap="round"/></svg>
<div class="a" style="left:301px;top:584.45px;width:10px;height:10px;background:#222;border-radius:1px;"></div>
<svg class="a" style="left:324px;top:586.45px" width="4" height="6" viewBox="0 0 4 6"><path d="M0 0 L4 3 L0 6Z" fill="#222"/></svg>
<div class="t" style="left:339.8px;top:608.29px;font-size:11px;color:#333;">33776</div>
<div class="t" style="left:403.8px;top:608.29px;font-size:11px;color:#333;">postgres</div>
<div class="t" style="left:499.5px;top:608.29px;font-size:11px;color:#333;">postgres</div>
<div class="t" style="left:582.8px;top:608.29px;font-size:11px;color:#333;">pgAdmin 4 - DB:postgres</div>
<div class="t" style="left:798.3px;top:608.29px;font-size:11px;color:#333;">::1</div>
<div class="t" style="left:862.9px;top:608.29px;font-size:11px;color:#333;">2021-05-31 18:29:16 IST</div>
<div class="t" style="left:1073.8px;top:608.29px;font-size:11px;color:#333;">active</div>
<svg class="a" style="left:279.9px;top:608.25px" width="11" height="11" viewBox="0 0 11 11"><circle cx="5.5" cy="5.5" r="5.5" fill="#d40000"/><path d="M3.4 3.4 L7.6 7.6 M7.6 3.4 L3.4 7.6" stroke="#fff" stroke-width="2" stroke-linecap="round"/></svg>
<div class="a" style="left:301px;top:608.75px;width:10px;height:10px;background:#222;border-radius:1px;"></div>
<svg class="a" style="left:324px;top:610.75px" width="4" height="6" viewBox="0 0 4 6"><path d="M0 0 L4 3 L0 6Z" fill="#222"/></svg>
<div class="a" style="left:261px;top:26px;width:77px;height:26px;border:2px solid #c00000;box-sizing:border-box;"></div>
<svg class="a" style="left:0;top:0" width="1536" height="817">
<path d="M400.4 70.8 L350 42" stroke="#c00000" stroke-width="3" stroke-linecap="round"/>
<path d="M344.5 38.8 L355.5 39.2 L350 47.2Z" fill="#c00000"/>
</svg>
</body></html>
